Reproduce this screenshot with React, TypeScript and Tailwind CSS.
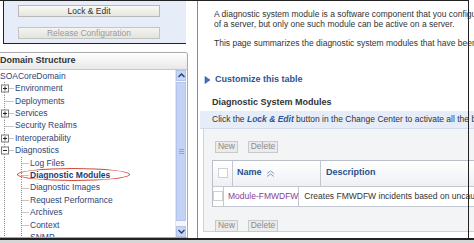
import React from "react";

const F = { fontFamily: '"Liberation Sans", Arial, sans-serif' };

type Row = { label: string; level: 0 | 1 | 2; exp?: "+" | "-"; bold?: boolean };

const rows: Row[] = [
  { label: "SOACoreDomain", level: 0 },
  { label: "Environment", level: 1, exp: "+" },
  { label: "Deployments", level: 1 },
  { label: "Services", level: 1, exp: "+" },
  { label: "Security Realms", level: 1 },
  { label: "Interoperability", level: 1, exp: "+" },
  { label: "Diagnostics", level: 1, exp: "-" },
  { label: "Log Files", level: 2 },
  { label: "Diagnostic Modules", level: 2, bold: true },
  { label: "Diagnostic Images", level: 2 },
  { label: "Request Performance", level: 2 },
  { label: "Archives", level: 2 },
  { label: "Context", level: 2 },
  { label: "SNMP", level: 2 },
];

function Gutter({ row }: { row: Row }) {
  if (row.level === 0) return null;
  const w = row.level === 1 ? 15 : 30;
  const h = 12.4;
  const m = 6.5;
  const dot = { stroke: "#8c8c8c", strokeWidth: 1, strokeDasharray: "1 1" };
  return (
    <svg width={w} height={h} className="shrink-0" viewBox={`0 0 ${w} ${h}`}>
      <line x1={4.5} y1={0} x2={4.5} y2={h} {...dot} />
      {row.level === 1 && <line x1={4.5} y1={m} x2={14} y2={m} {...dot} />}
      {row.level === 2 && (
        <>
          <line x1={21.5} y1={0} x2={21.5} y2={h} {...dot} />
          <line x1={21.5} y1={m} x2={29} y2={m} {...dot} />
        </>
      )}
      {row.exp && (
        <>
          <rect x={1.5} y={3} width={7} height={7} fill="#fff" stroke="#7a7a7a" strokeWidth={1} />
          <line x1={3} y1={6.5} x2={7} y2={6.5} stroke="#222" strokeWidth={1} />
          {row.exp === "+" && <line x1={5} y1={4.5} x2={5} y2={8.5} stroke="#222" strokeWidth={1} />}
        </>
      )}
    </svg>
  );
}

function SmallBtn({ children, w }: { children: React.ReactNode; w: string }) {
  return (
    <div
      className={`${w} h-[12px] flex items-center justify-center border border-[#c9c9c9] bg-[#ebebeb] text-[8.5px] text-[#8c8c8c]`}
    >
      {children}
    </div>
  );
}

export default function App() {
  return (
    <div className="relative w-[474px] h-[243px] overflow-hidden bg-white text-[8.5px] text-[#333]" style={F}>
      <div className="flex h-[238px]">
        {/* Left column */}
        <div className="w-[198px] shrink-0 flex flex-col border-r border-[#8a8a8a]">
          {/* Change center */}
          <div className="ml-[3px] w-[183px] h-[44px] bg-[#e7edf8] border-t border-l border-b border-[#222] border-r-[#7d7d7d] flex flex-col items-start pl-[14px] pt-[4px]">
            <div className="w-[142px] h-[12px] flex items-center justify-center border border-[#b9b9b9] bg-gradient-to-b from-[#fafaf6] to-[#e6e6e0] text-[8.5px] text-[#333]">
              Lock &amp; Edit
            </div>
            <div className="mt-[10px] w-[142px] h-[12px] flex items-center justify-center border border-[#c4c4c4] bg-gradient-to-b from-[#f4f4f0] to-[#e4e4de] text-[8.5px] text-[#9a9a9a]">
              Release Configuration
            </div>
          </div>
          {/* Domain structure */}
          <div className="mt-[8px] w-[188px] h-[186px] border-t border-r border-b border-[#a9a9a9] rounded-tr-[3px] flex flex-col overflow-hidden">
            <div className="h-[17px] shrink-0 bg-gradient-to-b from-white to-[#e8e8e8] border-b border-[#c7c7c7] flex items-center pl-[0px] text-[9px] font-bold text-[#333]">
              Domain Structure
            </div>
            <div className="flex flex-1 min-h-0">
              <div className="flex-1 overflow-hidden text-[8.5px] text-[#2e4578] pt-[0px]">
                {rows.map((r) => (
                  <div key={r.label} className="h-[12.4px] flex items-center whitespace-nowrap">
                    <Gutter row={r} />
                    <span className={r.bold ? "font-bold text-[#213b74]" : ""}>{r.label}</span>
                  </div>
                ))}
              </div>
              {/* scrollbar */}
              <div className="w-[11px] shrink-0 mr-[1px] flex flex-col bg-[#f4f6fb] border-l border-[#e2e6ef]">
                <div className="h-[11px] flex items-center justify-center bg-[#c7d6f6] border border-[#b4c4e8]">
                  <svg width="7" height="5" viewBox="0 0 7 5">
                    <path d="M0.5 4 L3.5 1 L6.5 4" fill="none" stroke="#2b3f7a" strokeWidth="1.5" />
                  </svg>
                </div>
                <div className="mt-[1px] h-[139px] bg-[#c3d3f5] border border-[#b3c5ee] flex items-end justify-center pb-[66px]">
                  <div className="flex flex-col gap-[1px]">
                    <div className="w-[5px] h-px bg-[#8ea4d6]" />
                    <div className="w-[5px] h-px bg-[#8ea4d6]" />
                    <div className="w-[5px] h-px bg-[#8ea4d6]" />
                  </div>
                </div>
                <div className="flex-1" />
                <div className="h-[11px] flex items-center justify-center bg-[#c7d6f6] border border-[#b4c4e8]">
                  <svg width="7" height="5" viewBox="0 0 7 5">
                    <path d="M0.5 1 L3.5 4 L6.5 1" fill="none" stroke="#2b3f7a" strokeWidth="1.5" />
                  </svg>
                </div>
              </div>
            </div>
          </div>
        </div>

        {/* Right column */}
        <div className="flex-1 min-w-0 flex flex-col whitespace-nowrap">
          <div className="pl-[16px] pt-[10px] leading-[9.5px]">
            <div>A diagnostic system module is a software component that you configure</div>
            <div>of a server, but only one such module can be active on a server.</div>
          </div>
          <div className="pl-[16px] mt-[10px] leading-[9.5px]">
            This page summarizes the diagnostic system modules that have been created
          </div>
          <div className="pl-[6px] mt-[25px] h-[12px] flex items-center gap-[4px]">
            <svg width="7" height="8" viewBox="0 0 7 8">
              <path d="M1 0.5 L6 4 L1 7.5 Z" fill="#3f72c4" stroke="#2a559f" strokeWidth="0.6" />
            </svg>
            <span className="font-bold text-[9px] text-[#2d5597]">Customize this table</span>
          </div>
          <div className="pl-[14px] mt-[11px] h-[12px] flex items-center font-bold text-[9px] text-[#333]">
            Diagnostic System Modules
          </div>
          <div className="ml-[2px] mt-[2px] h-[18px] bg-[#e6edf8] border-b border-[#d3dbe8] flex items-center pl-[12px]">
            Click the&nbsp;<span className="font-bold italic text-[#2a5599]">Lock &amp; Edit</span>&nbsp;button in the Change Center to activate all the buttons on this page.
          </div>
          <div className="ml-[5px] h-[103px] bg-[#f3f4f6] border-l border-b border-[#cfd2d8] flex flex-col pl-[8px]">
            <div className="mt-[12px] flex gap-[10px] pl-[3px]">
              <SmallBtn w="w-[23px]">New</SmallBtn>
              <SmallBtn w="w-[30px]">Delete</SmallBtn>
            </div>
            <div className="mt-[7px] border-l border-t border-[#b9bec8] bg-white">
              <div className="h-[26px] flex bg-gradient-to-b from-white to-[#eef0f4] border-b border-[#c3c7cf]">
                <div className="w-[20px] flex items-center justify-center border-r border-[#c3c7cf]">
                  <div className="w-[10px] h-[10px] bg-white border border-[#d0d0d0]" />
                </div>
                <div className="w-[88px] flex items-center pl-[4px] gap-[4px] border-r border-[#c3c7cf] font-bold text-[9px] text-[#2a4f8f]">
                  Name
                  <svg width="9" height="7" viewBox="0 0 9 7">
                    <path d="M1 3.5 L4.5 1 L8 3.5 M1 6.5 L4.5 4 L8 6.5" fill="none" stroke="#8a9cc4" strokeWidth="1" />
                  </svg>
                </div>
                <div className="flex-1 flex items-center pl-[5px] font-bold text-[9px] text-[#2a4f8f]">Description</div>
              </div>
              <div className="h-[20px] flex border-b border-[#c3c7cf]">
                <div className="w-[20px] flex items-center justify-center border-r border-[#c3c7cf]">
                  <div className="w-[10px] h-[10px] bg-white border border-[#d0d0d0]" />
                </div>
                <div className="w-[88px] flex items-center pl-[4px] border-r border-[#c3c7cf] text-[#8b3d8f]">
                  Module-FMWDFW
                </div>
                <div className="flex-1 flex items-center pl-[5px] text-[#333]">
                  Creates FMWDFW incidents based on uncaught exceptions
                </div>
              </div>
            </div>
            <div className="mt-[13px] flex gap-[10px] pl-[3px]">
              <SmallBtn w="w-[23px]">New</SmallBtn>
              <SmallBtn w="w-[30px]">Delete</SmallBtn>
            </div>
          </div>
        </div>
      </div>
      <div className="h-[5px] bg-[#d6d6d6]" />

      {/* annotation frame lines */}
      <div className="absolute left-0 top-0 w-[469px] h-px bg-[#222]" />
      <div className="absolute left-[468px] top-0 w-px h-[239px] bg-[#222]" />
      <div className="absolute left-0 top-[238px] w-[474px] h-[2px] bg-[#222]" />
      {/* red ellipse */}
      <div className="absolute left-[17px] top-[168px] w-[113px] h-[13px] rounded-[50%] border border-[#d24a3c]" />
    </div>
  );
}
